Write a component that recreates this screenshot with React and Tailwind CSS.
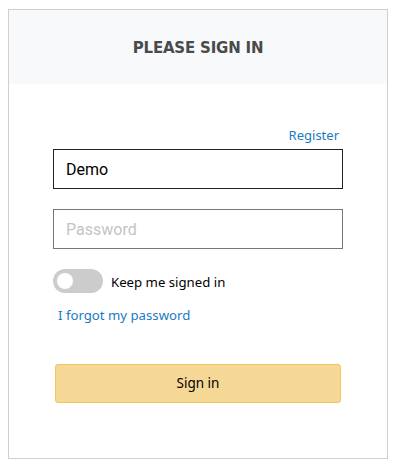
import React, { useState } from 'react';

const App = () => {
  const [keep, setKeep] = useState(false);

  return (
    <div className="w-[398px] h-[468px] bg-white pt-[9px] pl-[8px]">
      <div className="w-[380px] h-[450px] border border-[#cfcfcf] flex flex-col">
        {/* Header */}
        <div className="h-[74px] bg-[#f7f9fa] flex items-center justify-center pt-[2px]">
          <h1 className="text-[15px] font-bold text-[#4a4a4a] font-['DejaVu_Sans',sans-serif] tracking-[-0.2px]">
            PLEASE SIGN IN
          </h1>
        </div>

        {/* Form */}
        <div className="px-[44px] pt-[43px] font-['Noto_Sans',sans-serif]">
          <div className="flex justify-end items-start h-[22px]">
            <a className="text-[13px] text-[#1b7ac4] leading-[17px] mr-[4px]">Register</a>
          </div>
          <input
            defaultValue="Demo"
            className="w-[290px] h-[40px] border border-[#222] px-[12px] text-[16px] text-black font-['Roboto',sans-serif] outline-none"
          />
          <input
            type="password"
            placeholder="Password"
            className="mt-[20px] w-[290px] h-[40px] border border-[#777] px-[12px] text-[16px] font-['Roboto',sans-serif] placeholder:text-[#c4c4c4] outline-none"
          />

          <div className="mt-[20px] flex items-center gap-[8px]">
            <button
              onClick={() => setKeep(!keep)}
              className="w-[50px] h-[24px] rounded-full bg-[#cccccc] flex items-center px-[4px]"
            >
              <span className="w-[16px] h-[16px] rounded-full bg-white"></span>
            </button>
            <span className="text-[13.2px] text-black mt-[3px]">Keep me signed in</span>
          </div>

          <a className="block mt-[13px] ml-[5px] text-[13.2px] text-[#1b7ac4]">I forgot my password</a>

          <button className="mt-[38px] ml-[2px] w-[286px] h-[39px] bg-[#f6d896] border border-[#f0c55e] rounded-[3px] text-[13.5px] text-black">
            Sign in
          </button>
        </div>
      </div>
    </div>
  );
};

export default App;
